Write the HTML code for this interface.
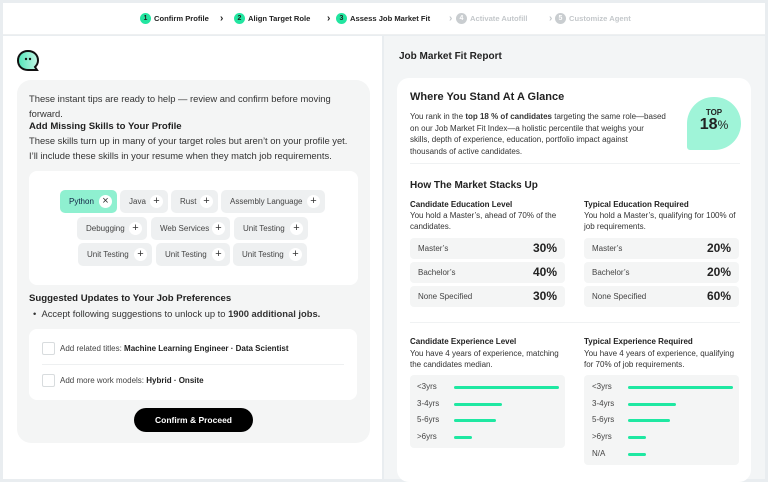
<!DOCTYPE html>
<html><head><meta charset="utf-8"><style>
*{box-sizing:border-box;margin:0;padding:0}
body{width:768px;height:482px;overflow:hidden;background:#e9edf0;font-family:"Liberation Sans",sans-serif;color:#222;position:relative}
.a{position:absolute}
.top{left:3px;top:3px;width:762px;height:32px;background:#fff;border-bottom:1px solid #eef0f1}
.step{position:absolute;top:10px;font-size:7.6px;font-weight:bold;color:#222;white-space:nowrap;line-height:12px}
.step i{display:inline-block;width:11px;height:11px;border-radius:50%;background:#22e5a0;font-style:normal;font-size:7px;text-align:center;line-height:11px;margin-right:3px;vertical-align:top}
.step.g{color:#c4c8cb}.step.g i{background:#c9cdd0;color:#fff}
.chev{position:absolute;top:10px;font-size:10px;font-weight:bold;line-height:12px}
.chev.g{color:#c4c8cb}
.left{left:3px;top:36px;width:379px;height:443px;background:#fff}
.right{left:384px;top:36px;width:381px;height:443px;background:#f3f5f6}
.card{left:17px;top:80px;width:353px;height:363px;background:#f4f5f5;border-radius:14px}
.t{font-size:9.4px;line-height:14.5px;color:#333;white-space:nowrap}
.h{font-size:9.6px;font-weight:bold;color:#222;white-space:nowrap}
.box{background:#fff;border-radius:8px}
.chip{position:absolute;height:23px;background:#eef0f1;border-radius:5px;font-size:8px;color:#444;line-height:23px;padding-left:9px}
.chip b{position:absolute;right:5px;top:5px;width:13px;height:13px;border-radius:50%;background:#fff;font-weight:normal;font-size:11px;line-height:12px;text-align:center;color:#333}
.cb{position:absolute;left:13px;width:13px;height:13px;border:1px solid #d8dcde;border-radius:2px;background:#fff}
.rc{left:397px;top:78px;width:354px;height:404px;background:#fff;border-radius:12px}
.s{font-size:8px;line-height:10.5px;color:#333;white-space:nowrap}
.row{position:absolute;height:21px;background:#f4f5f5;border-radius:4px;font-size:8px;color:#444;line-height:21px;padding-left:8px}
.row span{position:absolute;right:8px;font-size:12px;font-weight:bold;color:#222}
.bar{position:absolute;height:3px;background:#1fe8a2;border-radius:2px}
.lb{position:absolute;font-size:8px;color:#444}
</style></head><body>
<div class="a top">
<div class="step" style="left:137px"><i>1</i>Confirm Profile</div>
<div class="chev" style="left:217px">›</div>
<div class="step" style="left:231px"><i>2</i>Align Target Role</div>
<div class="chev" style="left:324px">›</div>
<div class="step" style="left:333px"><i>3</i>Assess Job Market Fit</div>
<div class="chev g" style="left:446px">›</div>
<div class="step g" style="left:453px"><i>4</i>Activate Autofill</div>
<div class="chev g" style="left:546px">›</div>
<div class="step g" style="left:552px"><i>5</i>Customize Agent</div>
</div>
<div class="a left"></div>
<div class="a right"></div>
<svg class="a" style="left:16px;top:49px" width="26" height="25" viewBox="0 0 26 25"><defs><linearGradient id="g" x1="0" x2="1"><stop offset="0" stop-color="#4fe6b8"/><stop offset="1" stop-color="#c6f6e6"/></linearGradient></defs><path d="M12 2C6 2 2 6 2 11.5S6 21 12 21h9l-2-3c2-2 3-4 3-6.5C22 6 18 2 12 2z" fill="url(#g)" stroke="#111" stroke-width="2"/><circle cx="10" cy="10" r="1.2" fill="#111"/><circle cx="14" cy="10" r="1.2" fill="#111"/></svg>
<div class="a card"></div>
<div class="a t" style="left:29px;top:92px">These instant tips are ready to help — review and confirm before moving<br>forward.</div>
<div class="a h" style="left:29px;top:121px">Add Missing Skills to Your Profile</div>
<div class="a t" style="left:29px;top:134px">These skills turn up in many of your target roles but aren’t on your profile yet.<br>I’ll include these skills in your resume when they match job requirements.</div>
<div class="a box" style="left:29px;top:171px;width:329px;height:114px">
<div class="chip" style="left:31px;top:19px;width:57px;background:#8ff0d0;color:#124">Python<b>×</b></div>
<div class="chip" style="left:91px;top:19px;width:48px">Java<b>+</b></div>
<div class="chip" style="left:142px;top:19px;width:47px">Rust<b>+</b></div>
<div class="chip" style="left:192px;top:19px;width:104px">Assembly Language<b>+</b></div>
<div class="chip" style="left:48px;top:46px;width:70px">Debugging<b>+</b></div>
<div class="chip" style="left:122px;top:46px;width:79px">Web Services<b>+</b></div>
<div class="chip" style="left:205px;top:46px;width:74px">Unit Testing<b>+</b></div>
<div class="chip" style="left:49px;top:72px;width:74px">Unit Testing<b>+</b></div>
<div class="chip" style="left:127px;top:72px;width:74px">Unit Testing<b>+</b></div>
<div class="chip" style="left:204px;top:72px;width:74px">Unit Testing<b>+</b></div>
</div>
<div class="a h" style="left:29px;top:293px">Suggested Updates to Your Job Preferences</div>
<div class="a t" style="left:33px;top:307px">• &nbsp;Accept following suggestions to unlock up to <b>1900 additional jobs.</b></div>
<div class="a box" style="left:29px;top:329px;width:328px;height:71px">
<div class="cb" style="top:13px"></div><div class="a" style="left:31px;top:15px;font-size:8px;color:#444;white-space:nowrap">Add related titles: <b style="color:#222">Machine Learning Engineer · Data Scientist</b></div>
<div class="a" style="left:13px;top:35px;width:302px;border-top:1px solid #eef0f1"></div>
<div class="cb" style="top:45px"></div><div class="a" style="left:31px;top:47px;font-size:8px;color:#444">Add more work models: <b style="color:#222">Hybrid · Onsite</b></div>
</div>
<div class="a" style="left:134px;top:408px;width:119px;height:24px;background:#000;border-radius:12px;color:#fff;font-size:8.5px;font-weight:bold;text-align:center;line-height:24px">Confirm &amp; Proceed</div>

<div class="a" style="left:399px;top:51px;font-size:10px;font-weight:bold">Job Market Fit Report</div>
<div class="a rc"></div>
<div class="a" style="left:410px;top:91px;font-size:11px;font-weight:bold">Where You Stand At A Glance</div>
<div class="a s" style="left:410px;top:111px;line-height:11.5px">You rank in the <b>top 18 % of candidates</b> targeting the same role—based<br>on our Job Market Fit Index—a holistic percentile that weighs your<br>skills, depth of experience, education, portfolio impact against<br>thousands of active candidates.</div>
<div class="a" style="left:687px;top:97px;width:54px;height:53px;background:#9ff4d8;border-radius:27px 27px 27px 3px;text-align:center">
<div style="font-size:8px;font-weight:bold;margin-top:11px">TOP</div><div style="font-size:16px;font-weight:bold;line-height:16px">18<span style="font-weight:normal;font-size:12px">%</span></div></div>
<div class="a" style="left:410px;top:163px;width:330px;border-top:1px solid #f0f2f3"></div>
<div class="a" style="left:410px;top:180px;font-size:10px;font-weight:bold">How The Market Stacks Up</div>
<div class="a" style="left:410px;top:200px;font-size:8px;font-weight:bold">Candidate Education Level</div>
<div class="a s" style="left:410px;top:211px">You hold a Master’s, ahead of 70% of the<br>candidates.</div>
<div class="a" style="left:584px;top:200px;font-size:8px;font-weight:bold">Typical Education Required</div>
<div class="a s" style="left:584px;top:211px">You hold a Master’s, qualifying for 100% of<br>job requirements.</div>
<div class="row" style="left:410px;top:238px;width:155px">Master’s<span>30%</span></div>
<div class="row" style="left:410px;top:262px;width:155px">Bachelor’s<span>40%</span></div>
<div class="row" style="left:410px;top:286px;width:155px">None Specified<span>30%</span></div>
<div class="row" style="left:584px;top:238px;width:155px">Master’s<span>20%</span></div>
<div class="row" style="left:584px;top:262px;width:155px">Bachelor’s<span>20%</span></div>
<div class="row" style="left:584px;top:286px;width:155px">None Specified<span>60%</span></div>
<div class="a" style="left:410px;top:322px;width:330px;border-top:1px solid #f0f2f3"></div>
<div class="a" style="left:410px;top:337px;font-size:8px;font-weight:bold">Candidate Experience Level</div>
<div class="a s" style="left:410px;top:349px">You have 4 years of experience, matching<br>the candidates median.</div>
<div class="a" style="left:584px;top:337px;font-size:8px;font-weight:bold">Typical Experience Required</div>
<div class="a s" style="left:584px;top:349px">You have 4 years of experience, qualifying<br>for 70% of job requirements.</div>
<div class="a" style="left:410px;top:375px;width:155px;height:73px;background:#f4f5f5;border-radius:4px"></div>
<div class="a" style="left:584px;top:375px;width:155px;height:90px;background:#f4f5f5;border-radius:4px"></div>
<div class="lb" style="left:417px;top:382px">&lt;3yrs</div><div class="bar" style="left:454px;top:386px;width:105px"></div>
<div class="lb" style="left:417px;top:399px">3-4yrs</div><div class="bar" style="left:454px;top:403px;width:48px"></div>
<div class="lb" style="left:417px;top:415px">5-6yrs</div><div class="bar" style="left:454px;top:419px;width:42px"></div>
<div class="lb" style="left:417px;top:432px">&gt;6yrs</div><div class="bar" style="left:454px;top:436px;width:18px"></div>
<div class="lb" style="left:592px;top:382px">&lt;3yrs</div><div class="bar" style="left:628px;top:386px;width:105px"></div>
<div class="lb" style="left:592px;top:399px">3-4yrs</div><div class="bar" style="left:628px;top:403px;width:48px"></div>
<div class="lb" style="left:592px;top:415px">5-6yrs</div><div class="bar" style="left:628px;top:419px;width:42px"></div>
<div class="lb" style="left:592px;top:432px">&gt;6yrs</div><div class="bar" style="left:628px;top:436px;width:18px"></div>
<div class="lb" style="left:592px;top:449px">N/A</div><div class="bar" style="left:628px;top:453px;width:18px"></div>
</body></html>
